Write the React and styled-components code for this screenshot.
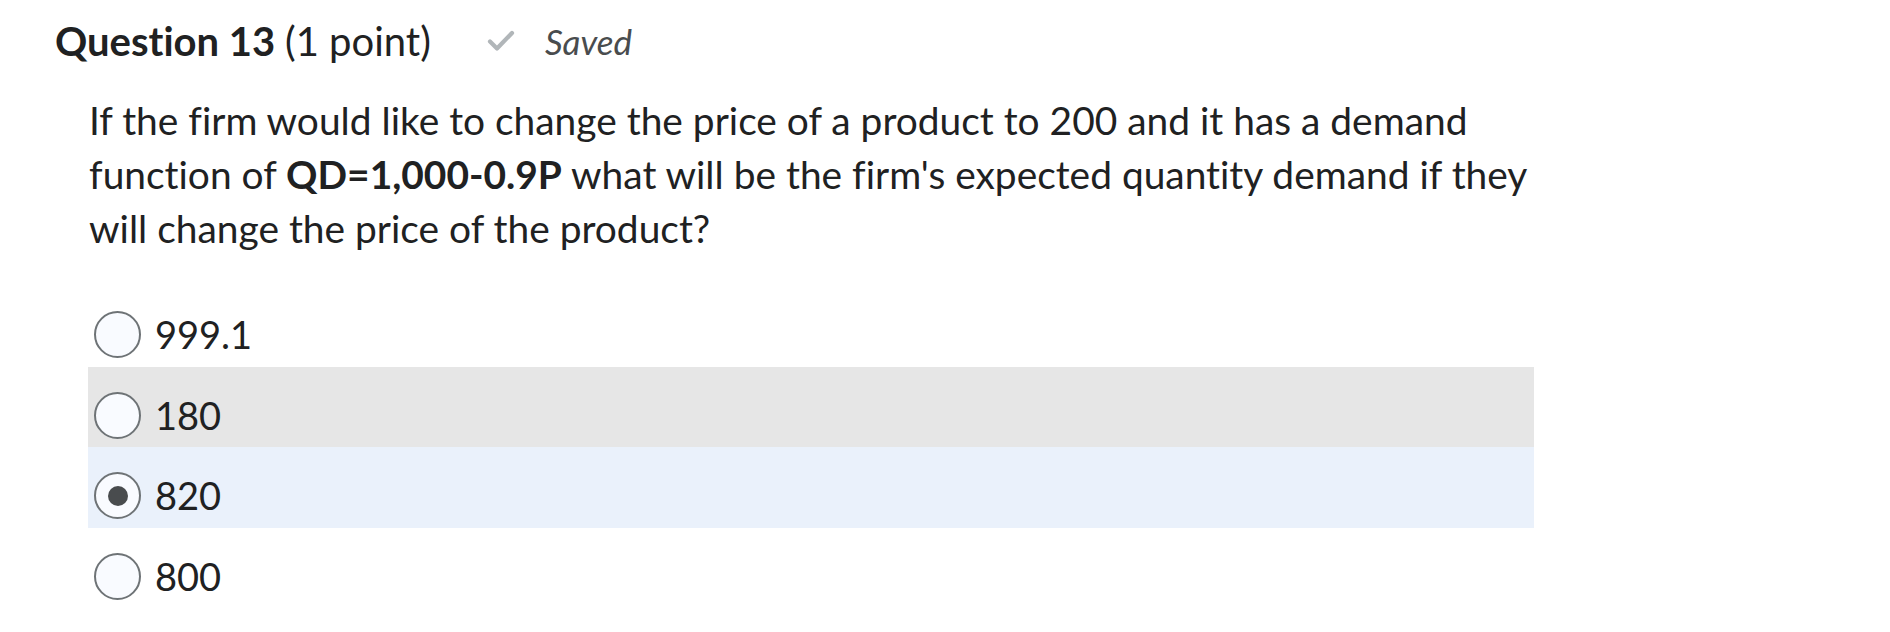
import React from "react";
import styled, { createGlobalStyle } from "styled-components";

const Global = createGlobalStyle`
  html, body { margin: 0; padding: 0; background: #ffffff; }
  body {
    font-family: Lato, "Open Sans", sans-serif;
    color: #202122;
    font-variant-ligatures: none;
    font-feature-settings: "liga" 0;
  }
`;

const Page = styled.div`
  padding: 17px 0 0 55px;
  width: 1479px;
`;

const Header = styled.div`
  display: flex;
  align-items: center;
  height: 48px;
`;

const Title = styled.h2`
  margin: 0;
  font-size: 40px;
  font-weight: 700;
  color: #202122;
  line-height: 48px;
  white-space: nowrap;
`;

const Points = styled.span`
  font-weight: 400;
`;

const SavedBox = styled.div`
  display: flex;
  align-items: center;
  margin-left: 56px;
  gap: 30px;
`;

const SavedText = styled.span`
  font-style: italic;
  font-size: 35px;
  color: #494c4e;
`;

const Body = styled.div`
  padding-left: 34px;
`;

const Question = styled.p`
  margin: 28px 0 31px 0;
  font-size: 38.9px;
  line-height: 54px;
  color: #202122;
  width: 1470px;
`;

const Strong = styled.strong`
  font-weight: 700;
`;

const Options = styled.div`
  display: flex;
  flex-direction: column;
  width: 1446px;
  margin-left: 33px;
`;

const Row = styled.label`
  display: flex;
  align-items: flex-start;
  height: 80.5px;
  box-sizing: border-box;
  padding: 25px 0 0 6px;
  background: ${(p) => (p.$tone === "hover" ? "#e6e6e6" : p.$tone === "selected" ? "#eaf1fb" : "transparent")};
`;

const Radio = styled.span`
  width: 47px;
  height: 47px;
  box-sizing: border-box;
  border-radius: 50%;
  border: 2px solid #6e7376;
  background: #f9fbff;
  display: flex;
  align-items: center;
  justify-content: center;
  flex-shrink: 0;
`;

const Dot = styled.span`
  width: 20px;
  height: 20px;
  border-radius: 50%;
  background: #494c4e;
`;

const OptionText = styled.span`
  margin-left: 14px;
  font-size: 38px;
  line-height: 47px;
  color: #202122;
`;

const CheckIcon = () => (
  <svg width="28" height="22" viewBox="0 0 28 22" aria-hidden="true">
    <path d="M3 11.5 L10 18.5 L25 3" fill="none" stroke="#b1b6b9" strokeWidth="4.2" strokeLinecap="round" strokeLinejoin="round" />
  </svg>
);

const options = [
  { text: "999.1", tone: "none" },
  { text: "180", tone: "hover" },
  { text: "820", tone: "selected", checked: true },
  { text: "800", tone: "none" },
];

export default function App() {
  return (
    <>
      <Global />
      <Page>
        <Header>
          <Title>
            Question 13 <Points>(1 point)</Points>
          </Title>
          <SavedBox>
            <CheckIcon />
            <SavedText>Saved</SavedText>
          </SavedBox>
        </Header>
        <Body>
          <Question>
            If the firm would like to change the price of a product to 200 and it has a demand function of{" "}
            <Strong>QD=1,000-0.9P</Strong> what will be the firm's expected quantity demand if they will change the price of the product?
          </Question>
        </Body>
        <Options>
          {options.map((o) => (
            <Row key={o.text} $tone={o.tone}>
              <Radio>{o.checked && <Dot />}</Radio>
              <OptionText>{o.text}</OptionText>
            </Row>
          ))}
        </Options>
      </Page>
    </>
  );
}
